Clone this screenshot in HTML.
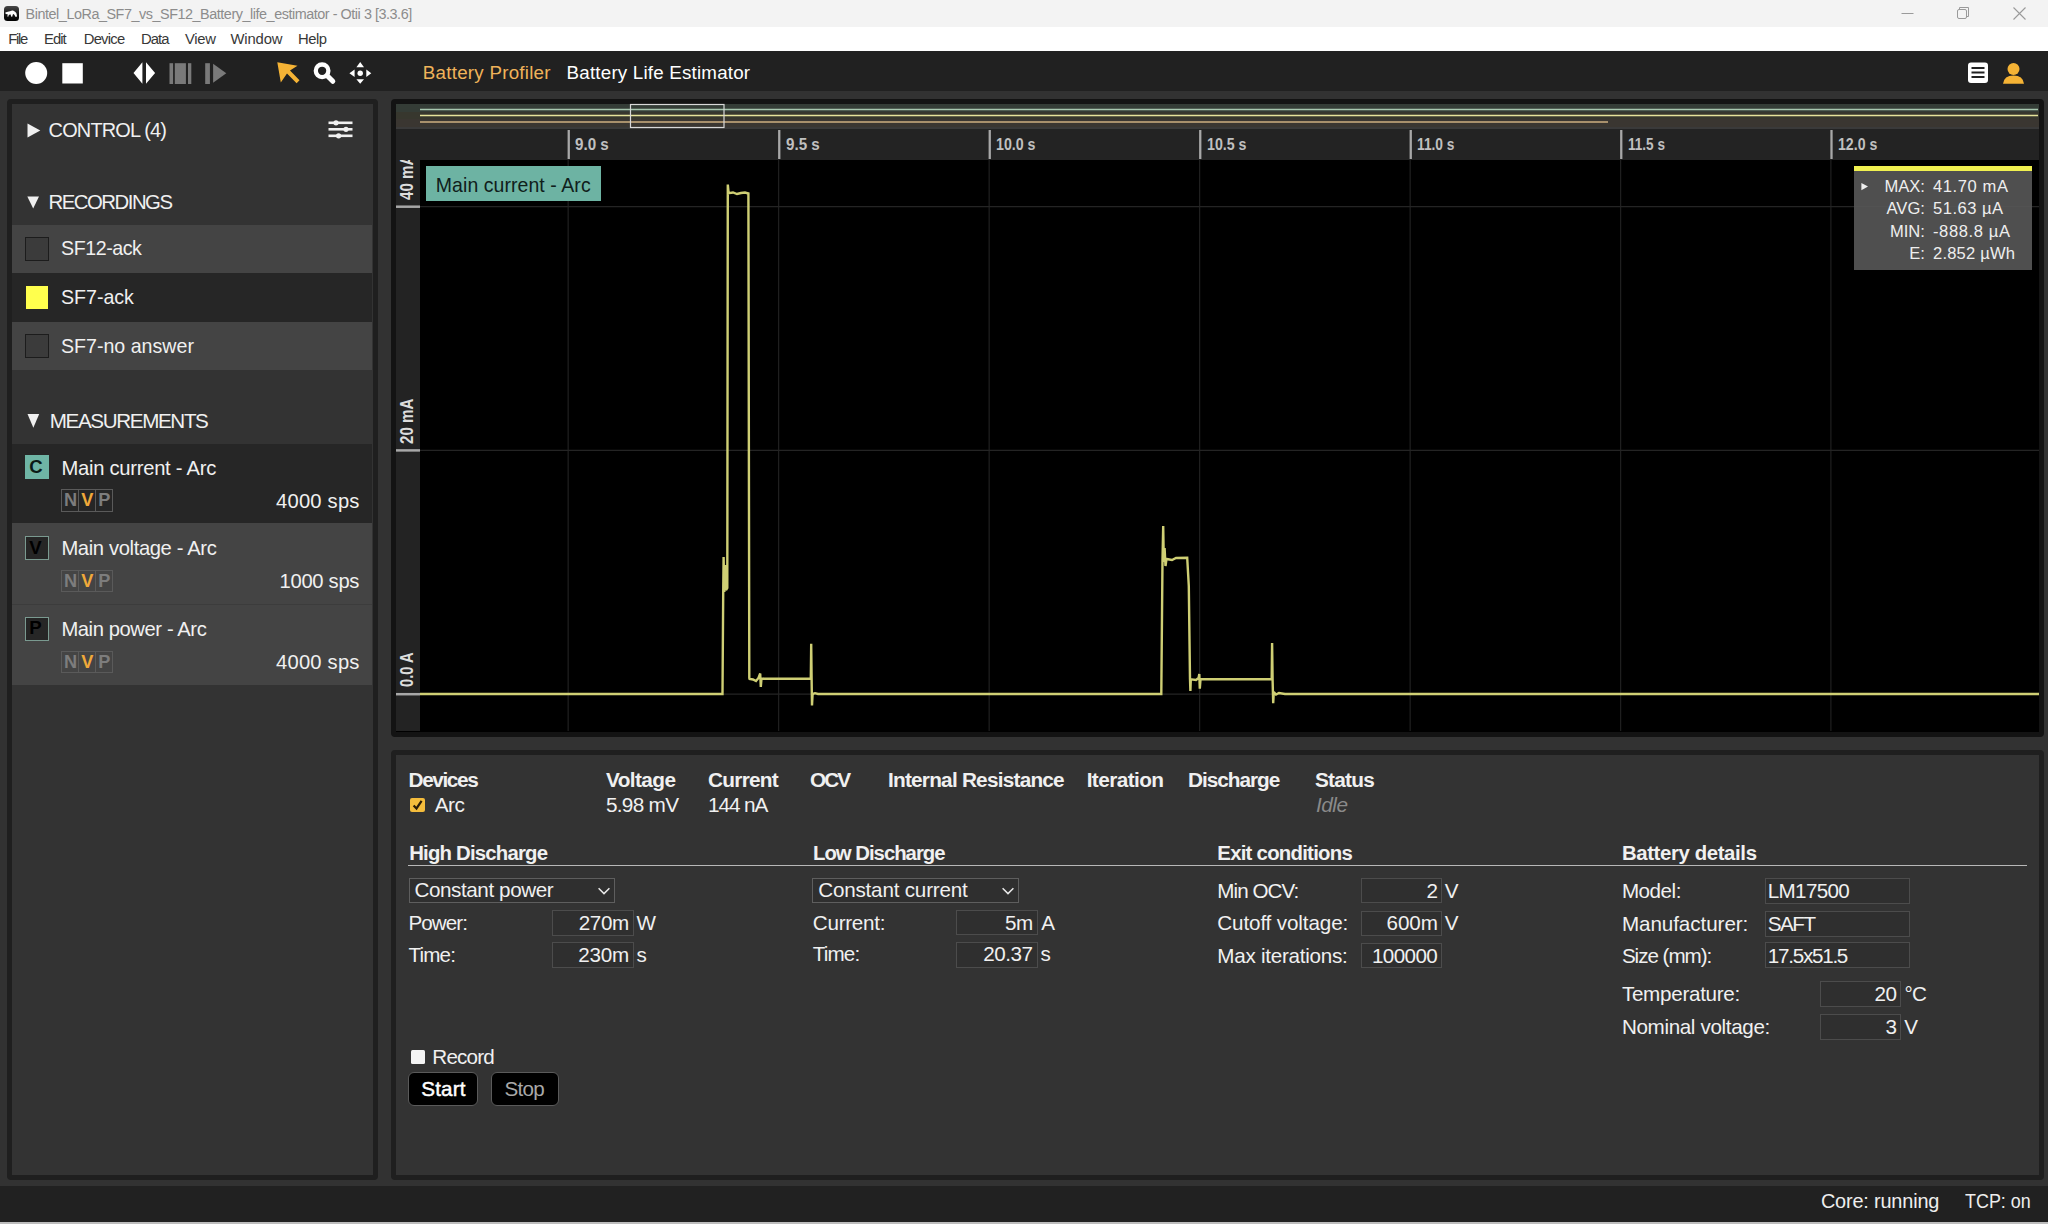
<!DOCTYPE html><html><head><meta charset="utf-8"><style>
html,body{margin:0;padding:0;width:2048px;height:1224px;overflow:hidden;background:#2f2f2f}
body{position:relative;font-family:"Liberation Sans",sans-serif}
.r{position:absolute;box-sizing:content-box}
.t{position:absolute;white-space:nowrap;line-height:1;}
</style></head><body>
<div class="r" style="left:0px;top:0px;width:2048px;height:27px;background:#f3f3f3;"></div>
<div class="r" style="left:0px;top:27px;width:2048px;height:24px;background:#ffffff;"></div>
<div class="r" style="left:0px;top:51px;width:2048px;height:40px;background:#212121;"></div>
<div class="r" style="left:0px;top:91px;width:2048px;height:1095px;background:#323232;"></div>
<div class="r" style="left:0px;top:1186px;width:2048px;height:36px;background:#212121;"></div>
<div class="r" style="left:0px;top:1222px;width:2048px;height:2px;background:#bdbdbd;"></div>
<div class="r" style="left:3.8px;top:5.9px;width:15px;height:15px;background:linear-gradient(#484848,#161616 55%,#000);border-radius:3.5px"></div>
<svg class="r" style="left:0;top:0" width="24" height="26" viewBox="0 0 24 26"><path d="M5.3 12.6 Q8 11.6 10 11.2 Q12 10.2 13 10.5 Q15.5 11.5 16.3 13 Q17 15 17 16.6 L15.7 16.9 L13.8 14 L12.8 14.6 L12.2 16.7 L11 16.5 L10.8 14.6 L8.9 14.7 L8.2 16.7 L7.4 16.5 L7.7 14.3 L5.7 14 Z" fill="#fff"/></svg>
<div class="t" style="left:25.60px;top:6.62px;font-size:14.39px;color:#8c8c8c;letter-spacing:-0.453px;">Bintel_LoRa_SF7_vs_SF12_Battery_life_estimator - Otii 3 [3.3.6]</div>
<svg class="r" style="left:1890px;top:0px" width="158" height="27" viewBox="1890 0 158 27"><line x1="1901.5" y1="13.5" x2="1913.5" y2="13.5" stroke="#9a9a9a" stroke-width="1"/><rect x="1957.5" y="9.5" width="9" height="9" fill="none" stroke="#9a9a9a" stroke-width="1" rx="1.5"/><path d="M1959.5 9.5 V7.5 H1968.5 V16.5 H1966.5" fill="none" stroke="#9a9a9a" stroke-width="1"/><path d="M2013.5 7.5 L2025.5 19.5 M2025.5 7.5 L2013.5 19.5" stroke="#9a9a9a" stroke-width="1.1"/></svg>
<div class="t" style="left:8.20px;top:31.85px;font-size:14.83px;color:#383838;letter-spacing:-1.295px;">File</div>
<div class="t" style="left:44.10px;top:31.85px;font-size:14.83px;color:#383838;letter-spacing:-1.015px;">Edit</div>
<div class="t" style="left:83.70px;top:31.85px;font-size:14.83px;color:#383838;letter-spacing:-0.765px;">Device</div>
<div class="t" style="left:141.00px;top:31.85px;font-size:14.83px;color:#383838;letter-spacing:-0.942px;">Data</div>
<div class="t" style="left:185.00px;top:31.85px;font-size:14.83px;color:#383838;letter-spacing:-0.302px;">View</div>
<div class="t" style="left:230.50px;top:31.85px;font-size:14.83px;color:#383838;letter-spacing:-0.153px;">Window</div>
<div class="t" style="left:298.00px;top:31.85px;font-size:14.83px;color:#383838;letter-spacing:-0.499px;">Help</div>
<svg class="r" style="left:0;top:51px" width="400" height="40" viewBox="0 51 400 40">
<circle cx="36.2" cy="73" r="11" fill="#fff"/>
<rect x="62.3" y="63.2" width="20.5" height="20.3" fill="#fff"/>
<path d="M133.5 73 L142.4 62.3 L142.4 83.7 Z M146 62.3 L155.1 73 L146 83.7 Z" fill="#fff"/>
<rect x="169.5" y="63.2" width="3.6" height="20.8" fill="#7a7a7a"/>
<rect x="174.8" y="63.2" width="11.1" height="20.8" fill="#7a7a7a"/>
<rect x="188" y="63.2" width="3.3" height="20.8" fill="#7a7a7a"/>
<rect x="205.2" y="63.2" width="4.7" height="20.8" fill="#7a7a7a"/>
<path d="M213.1 63.8 L226.3 73.3 L213.1 82.8 Z" fill="#7a7a7a"/>
<path d="M277.3 62.3 L297.5 65.8 L290 70.6 L299.5 80.3 L296.6 83.3 L287 73.6 L280.8 82.5 Z" fill="#f5b335"/>
<circle cx="322.1" cy="70.8" r="6.3" fill="none" stroke="#fff" stroke-width="4.3"/>
<path d="M327.5 76 L332.8 81.3" stroke="#fff" stroke-width="5" stroke-linecap="round"/>
<path d="M360.2 62 L364 67.3 L356.4 67.3 Z M360.2 83.7 L364 79.3 L356.4 79.3 Z M349.4 73.2 L354.6 69.4 L354.6 77 Z M371.3 73.2 L366.3 69.4 L366.3 77 Z" fill="#fff"/>
<circle cx="360.2" cy="73.2" r="2.7" fill="#fff"/>
</svg>
<div class="t" style="left:422.80px;top:64.03px;font-size:18.75px;color:#f0b35a;letter-spacing:0.247px;">Battery Profiler</div>
<div class="t" style="left:566.60px;top:64.03px;font-size:18.75px;color:#ffffff;letter-spacing:0.203px;">Battery Life Estimator</div>
<svg class="r" style="left:1960px;top:55px" width="80" height="35" viewBox="1960 55 80 35">
<rect x="1968" y="62.5" width="20" height="20.5" rx="3" fill="#fff"/>
<rect x="1971.5" y="67" width="13" height="2" fill="#222"/>
<rect x="1971.5" y="71.5" width="13" height="2" fill="#222"/>
<rect x="1971.5" y="76" width="13" height="2" fill="#222"/>
<circle cx="2013.5" cy="69" r="6" fill="#f5b335"/>
<path d="M2003 83.8 Q2004 75.5 2013.5 75.5 Q2023 75.5 2024 83.8 Z" fill="#f5b335"/>
</svg>
<div class="r" style="left:7px;top:99px;width:361px;height:1071px;border:5px solid #1f1f1f;border-radius:4px;background:#333"></div>
<div class="r" style="left:391px;top:99px;width:1643px;height:628px;border:5px solid #131313;border-radius:4px;background:#000"></div>
<div class="r" style="left:391px;top:750px;width:1643px;height:420px;border:5px solid #1f1f1f;border-radius:4px;background:#333"></div>
<svg class="r" style="left:20px;top:115px" width="360" height="330" viewBox="20 115 360 330"><path d="M27.5 123.5 L40.3 130.5 L27.5 137.5 Z" fill="#f0f0f0"/><path d="M27.3 196.6 L39 196.6 L33.2 208.5 Z" fill="#f0f0f0"/><path d="M27.5 414 L39.2 414 L33.35 427.8 Z" fill="#f0f0f0"/><rect x="328.5" y="121.5" width="24" height="2.6" fill="#f0f0f0"/><rect x="328.5" y="128" width="24" height="2.6" fill="#f0f0f0"/><rect x="328.5" y="134.5" width="24" height="2.6" fill="#f0f0f0"/><circle cx="336" cy="122.8" r="2.6" fill="#f0f0f0"/><circle cx="346" cy="129.3" r="2.6" fill="#f0f0f0"/><circle cx="338.6" cy="135.8" r="2.6" fill="#f0f0f0"/></svg>
<div class="t" style="left:48.60px;top:121.24px;font-size:19.91px;color:#f0f0f0;letter-spacing:-0.809px;">CONTROL (4)</div>
<div class="t" style="left:48.60px;top:192.47px;font-size:20.35px;color:#f0f0f0;letter-spacing:-1.503px;">RECORDINGS</div>
<div class="t" style="left:49.70px;top:410.93px;font-size:20.64px;color:#f0f0f0;letter-spacing:-1.364px;">MEASUREMENTS</div>
<div class="r" style="left:12px;top:225px;width:360px;height:48px;background:#444444;"></div>
<div class="r" style="left:12px;top:273px;width:360px;height:48.5px;background:#262626;"></div>
<div class="r" style="left:12px;top:321.5px;width:360px;height:48.5px;background:#444444;"></div>
<div class="r" style="left:25px;top:237px;width:22px;height:22px;border:1px solid #1c1c1c;background:#3b3b3b"></div>
<div class="r" style="left:25.6px;top:286.2px;width:22.4px;height:23px;background:#ffff4d"></div>
<div class="r" style="left:25px;top:334px;width:22px;height:22px;border:1px solid #1c1c1c;background:#3b3b3b"></div>
<div class="t" style="left:61.00px;top:239.29px;font-size:19.62px;color:#f0f0f0;letter-spacing:-0.429px;">SF12-ack</div>
<div class="t" style="left:61.00px;top:288.19px;font-size:19.62px;color:#f0f0f0;letter-spacing:-0.016px;">SF7-ack</div>
<div class="t" style="left:61.00px;top:336.89px;font-size:19.62px;color:#f0f0f0;letter-spacing:-0.005px;">SF7-no answer</div>
<div class="r" style="left:12px;top:443.5px;width:360px;height:79.79999999999995px;background:#262626;"></div>
<div class="r" style="left:12px;top:523.3px;width:360px;height:81.0px;background:#444444;"></div>
<div class="r" style="left:12px;top:604.3px;width:360px;height:80.30000000000007px;background:#444444;"></div>
<div class="r" style="left:12px;top:603.5px;width:360px;height:1.2999999999999545px;background:#3c3c3c;"></div>
<div class="r" style="left:24.8px;top:455.3px;width:22px;height:22px;border:1px solid #6fb5a5;background:#6fb5a5"></div>
<div class="t" style="left:29.30px;top:457.85px;font-size:18.60px;color:#0c1a16;font-weight:bold;">C</div>
<div class="t" style="left:61.40px;top:457.50px;font-size:20.20px;color:#f0f0f0;letter-spacing:-0.260px;">Main current - Arc</div>
<div class="t" style="left:276.00px;top:490.50px;font-size:20.20px;color:#f0f0f0;letter-spacing:0.213px;">4000 sps</div>
<div class="r" style="left:61.4px;top:489.3px;width:49.5px;height:20.4px;border:1px solid #5a5a5a"></div>
<div class="r" style="left:78.4px;top:489.3px;width:1px;height:21.4px;background:#5a5a5a"></div>
<div class="r" style="left:95.2px;top:489.3px;width:1px;height:21.4px;background:#5a5a5a"></div>
<div class="t" style="left:64.00px;top:491.42px;font-size:18.17px;color:#7d7d7d;font-weight:bold;">N</div>
<div class="t" style="left:81.30px;top:491.42px;font-size:18.17px;color:#f0a93a;font-weight:bold;">V</div>
<div class="t" style="left:98.30px;top:491.42px;font-size:18.17px;color:#7d7d7d;font-weight:bold;">P</div>
<div class="r" style="left:24.8px;top:536.0px;width:22px;height:22px;border:1px solid #7a9a90;background:#262626"></div>
<div class="t" style="left:29.30px;top:538.55px;font-size:18.60px;color:#000000;font-weight:bold;">V</div>
<div class="t" style="left:61.40px;top:537.50px;font-size:20.20px;color:#f0f0f0;letter-spacing:-0.364px;">Main voltage - Arc</div>
<div class="t" style="left:279.50px;top:570.70px;font-size:20.20px;color:#f0f0f0;letter-spacing:-0.287px;">1000 sps</div>
<div class="r" style="left:61.4px;top:569.5px;width:49.5px;height:20.4px;border:1px solid #5a5a5a"></div>
<div class="r" style="left:78.4px;top:569.5px;width:1px;height:21.4px;background:#5a5a5a"></div>
<div class="r" style="left:95.2px;top:569.5px;width:1px;height:21.4px;background:#5a5a5a"></div>
<div class="t" style="left:64.00px;top:571.62px;font-size:18.17px;color:#7d7d7d;font-weight:bold;">N</div>
<div class="t" style="left:81.30px;top:571.62px;font-size:18.17px;color:#f0a93a;font-weight:bold;">V</div>
<div class="t" style="left:98.30px;top:571.62px;font-size:18.17px;color:#7d7d7d;font-weight:bold;">P</div>
<div class="r" style="left:24.8px;top:616.6px;width:22px;height:22px;border:1px solid #7a9a90;background:#262626"></div>
<div class="t" style="left:29.30px;top:619.15px;font-size:18.60px;color:#000000;font-weight:bold;">P</div>
<div class="t" style="left:61.40px;top:619.10px;font-size:20.20px;color:#f0f0f0;letter-spacing:-0.406px;">Main power - Arc</div>
<div class="t" style="left:276.00px;top:651.80px;font-size:20.20px;color:#f0f0f0;letter-spacing:0.213px;">4000 sps</div>
<div class="r" style="left:61.4px;top:650.6px;width:49.5px;height:20.4px;border:1px solid #5a5a5a"></div>
<div class="r" style="left:78.4px;top:650.6px;width:1px;height:21.4px;background:#5a5a5a"></div>
<div class="r" style="left:95.2px;top:650.6px;width:1px;height:21.4px;background:#5a5a5a"></div>
<div class="t" style="left:64.00px;top:652.72px;font-size:18.17px;color:#7d7d7d;font-weight:bold;">N</div>
<div class="t" style="left:81.30px;top:652.72px;font-size:18.17px;color:#f0a93a;font-weight:bold;">V</div>
<div class="t" style="left:98.30px;top:652.72px;font-size:18.17px;color:#7d7d7d;font-weight:bold;">P</div>
<div class="r" style="left:396px;top:104px;width:1643px;height:25px;background:#3a3a3a;"></div>
<div class="r" style="left:396px;top:104px;width:1643px;height:8px;background:#343c36;"></div>
<div class="r" style="left:396px;top:112px;width:1643px;height:7px;background:#37372e;"></div>
<div class="r" style="left:396px;top:119px;width:1643px;height:8px;background:#3a3631;"></div>
<div class="r" style="left:396px;top:129px;width:1643px;height:31px;background:#232323;"></div>
<div class="r" style="left:396px;top:160px;width:24px;height:571px;background:#232323;"></div>
<svg class="r" style="left:0;top:0" width="2048" height="1224" viewBox="0 0 2048 1224"><line x1="420" y1="109.5" x2="2038" y2="109.5" stroke="#a6c6ae" stroke-width="1.6"/><line x1="420" y1="115.5" x2="2038" y2="115.5" stroke="#e6e49c" stroke-width="1.6"/><line x1="420" y1="122" x2="1608" y2="122" stroke="#a8906c" stroke-width="1.8"/><rect x="630.5" y="104.5" width="93.5" height="23" fill="none" stroke="#d8d8d8" stroke-width="1.2"/><line x1="568.15" y1="160" x2="568.15" y2="731" stroke="#232323" stroke-width="1.1"/><line x1="568.75" y1="130" x2="568.75" y2="159" stroke="#a8a8a8" stroke-width="2.3"/><line x1="778.65" y1="160" x2="778.65" y2="731" stroke="#232323" stroke-width="1.1"/><line x1="779.25" y1="130" x2="779.25" y2="159" stroke="#a8a8a8" stroke-width="2.3"/><line x1="989.15" y1="160" x2="989.15" y2="731" stroke="#232323" stroke-width="1.1"/><line x1="989.75" y1="130" x2="989.75" y2="159" stroke="#a8a8a8" stroke-width="2.3"/><line x1="1199.65" y1="160" x2="1199.65" y2="731" stroke="#232323" stroke-width="1.1"/><line x1="1200.25" y1="130" x2="1200.25" y2="159" stroke="#a8a8a8" stroke-width="2.3"/><line x1="1410.15" y1="160" x2="1410.15" y2="731" stroke="#232323" stroke-width="1.1"/><line x1="1410.75" y1="130" x2="1410.75" y2="159" stroke="#a8a8a8" stroke-width="2.3"/><line x1="1620.65" y1="160" x2="1620.65" y2="731" stroke="#232323" stroke-width="1.1"/><line x1="1621.25" y1="130" x2="1621.25" y2="159" stroke="#a8a8a8" stroke-width="2.3"/><line x1="1830.9" y1="160" x2="1830.9" y2="731" stroke="#232323" stroke-width="1.1"/><line x1="1831.5" y1="130" x2="1831.5" y2="159" stroke="#a8a8a8" stroke-width="2.3"/><line x1="420" y1="206.7" x2="2039" y2="206.7" stroke="#242424" stroke-width="1.2"/><line x1="396" y1="206.7" x2="420" y2="206.7" stroke="#a8a8a8" stroke-width="2.5"/><line x1="420" y1="450.4" x2="2039" y2="450.4" stroke="#242424" stroke-width="1.2"/><line x1="396" y1="450.4" x2="420" y2="450.4" stroke="#a8a8a8" stroke-width="2.5"/><line x1="420" y1="694.2" x2="2039" y2="694.2" stroke="#242424" stroke-width="1.2"/><line x1="396" y1="694.2" x2="420" y2="694.2" stroke="#a8a8a8" stroke-width="2.5"/></svg>
<div class="t" style="left:575.05px;top:136.22px;font-size:16.28px;color:#c0c0c0;font-weight:bold;transform:scaleX(0.9322);transform-origin:0 0;">9.0 s</div>
<div class="t" style="left:785.55px;top:136.22px;font-size:16.28px;color:#c0c0c0;font-weight:bold;transform:scaleX(0.9322);transform-origin:0 0;">9.5 s</div>
<div class="t" style="left:996.05px;top:136.22px;font-size:16.28px;color:#c0c0c0;font-weight:bold;transform:scaleX(0.8728);transform-origin:0 0;">10.0 s</div>
<div class="t" style="left:1206.55px;top:136.22px;font-size:16.28px;color:#c0c0c0;font-weight:bold;transform:scaleX(0.8728);transform-origin:0 0;">10.5 s</div>
<div class="t" style="left:1417.05px;top:136.22px;font-size:16.28px;color:#c0c0c0;font-weight:bold;transform:scaleX(0.8453);transform-origin:0 0;">11.0 s</div>
<div class="t" style="left:1627.55px;top:136.22px;font-size:16.28px;color:#c0c0c0;font-weight:bold;transform:scaleX(0.8341);transform-origin:0 0;">11.5 s</div>
<div class="t" style="left:1837.80px;top:136.22px;font-size:16.28px;color:#c0c0c0;font-weight:bold;transform:scaleX(0.8684);transform-origin:0 0;">12.0 s</div>
<div class="r" style="left:396px;top:160px;width:24px;height:46px;overflow:hidden">
<div class="r" style="left:-396px;top:-160px;width:2048px;height:1224px">
<div class="r" style="left:413.6px;top:200.4px;width:0;height:0;transform:rotate(-90deg) scaleX(0.8479);transform-origin:0 0;"><div class="t" style="left:0;top:-15.13px;font-size:17.88px;font-weight:bold;color:#dcdcdc;">40 mA</div></div>
</div></div>
<div class="r" style="left:413.6px;top:443.5px;width:0;height:0;transform:rotate(-90deg) scaleX(0.8479);transform-origin:0 0;"><div class="t" style="left:0;top:-15.13px;font-size:17.88px;font-weight:bold;color:#dcdcdc;">20 mA</div></div>
<div class="r" style="left:413.6px;top:686.8px;width:0;height:0;transform:rotate(-90deg) scaleX(0.8272);transform-origin:0 0;"><div class="t" style="left:0;top:-15.13px;font-size:17.88px;font-weight:bold;color:#dcdcdc;">0.0 A</div></div>
<svg class="r" style="left:0;top:0" width="2048" height="1224" viewBox="0 0 2048 1224"><defs><clipPath id="pc"><rect x="420" y="160" width="1619" height="571"/></clipPath></defs><path d="M420,694.0 L722.5,694.0 L723.2,594 L723.6,557 L724.3,592 L725.2,565 L726,590 L727.3,588 L727.8,184.6 L728.6,193.2 L733,192.5 L737,194 L741,193 L745,192.5 L748.4,193.5 L749.3,678 L749.6,679 L753,679.5 L756,681 L758.5,678 L760.2,673.5 L760.8,687 L761.5,678.5 L764,678.8 L810.8,678.8 L811.2,643.7 L811.6,678 L812,705.4 L812.6,694 L815,693.2 L818,694.0 L1161.3,694.0 L1162.5,560 L1163.2,526 L1163.8,562 L1164.6,548 L1165.5,566 L1166.5,559 L1172,560 L1176,558 L1187.2,557.8 L1188.8,586 L1190,679 L1190.4,691 L1190.8,679.3 L1196,680 L1198.6,678 L1199.3,674 L1199.8,688.6 L1200.5,679.3 L1203,679.3 L1271.7,679.3 L1272.1,642.9 L1272.6,680 L1273.2,703.1 L1273.8,692 L1276,694.5 L1279,693 L1285,694.0 L2039,694.0" fill="none" stroke="#cfcf74" stroke-width="2.4" stroke-linejoin="miter" stroke-miterlimit="2" clip-path="url(#pc)"/></svg>
<div class="r" style="left:425.8px;top:166.2px;width:174.99999999999994px;height:35.20000000000002px;background:#6db3a3;"></div>
<div class="t" style="left:435.80px;top:175.91px;font-size:19.48px;color:#10201b;letter-spacing:0.071px;">Main current - Arc</div>
<div class="r" style="left:1854.2px;top:166.1px;width:177.79999999999995px;height:5.300000000000011px;background:#f0f050;"></div>
<div class="r" style="left:1854.2px;top:171.4px;width:177.79999999999995px;height:99.1px;background:rgba(88,88,88,0.9);"></div>
<svg class="r" style="left:1860px;top:182px" width="10" height="10" viewBox="0 0 10 10"><path d="M1.4 1 L8 4.6 L1.4 8.2 Z" fill="#eee"/></svg>
<div class="t" style="left:1884.39px;top:178.77px;font-size:16.57px;color:#eeeeee;">MAX:</div>
<div class="t" style="left:1933.00px;top:178.77px;font-size:16.57px;color:#eeeeee;letter-spacing:0.583px;">41.70 mA</div>
<div class="t" style="left:1886.54px;top:201.37px;font-size:16.57px;color:#eeeeee;">AVG:</div>
<div class="t" style="left:1933.00px;top:201.37px;font-size:16.57px;color:#eeeeee;letter-spacing:0.477px;">51.63 µA</div>
<div class="t" style="left:1889.92px;top:223.87px;font-size:16.57px;color:#eeeeee;">MIN:</div>
<div class="t" style="left:1933.00px;top:223.87px;font-size:16.57px;color:#eeeeee;letter-spacing:0.603px;">-888.8 µA</div>
<div class="t" style="left:1909.24px;top:246.17px;font-size:16.57px;color:#eeeeee;">E:</div>
<div class="t" style="left:1933.00px;top:246.17px;font-size:16.57px;color:#eeeeee;letter-spacing:0.192px;">2.852 µWh</div>
<div class="t" style="left:408.50px;top:770.11px;font-size:20.79px;color:#f0f0f0;font-weight:bold;letter-spacing:-1.381px;">Devices</div>
<div class="t" style="left:606.00px;top:770.11px;font-size:20.79px;color:#f0f0f0;font-weight:bold;letter-spacing:-0.590px;">Voltage</div>
<div class="t" style="left:708.10px;top:770.11px;font-size:20.79px;color:#f0f0f0;font-weight:bold;letter-spacing:-0.743px;">Current</div>
<div class="t" style="left:810.00px;top:770.11px;font-size:20.79px;color:#f0f0f0;font-weight:bold;letter-spacing:-1.971px;">OCV</div>
<div class="t" style="left:888.00px;top:770.11px;font-size:20.79px;color:#f0f0f0;font-weight:bold;letter-spacing:-0.772px;">Internal Resistance</div>
<div class="t" style="left:1086.70px;top:770.11px;font-size:20.79px;color:#f0f0f0;font-weight:bold;letter-spacing:-0.587px;">Iteration</div>
<div class="t" style="left:1188.00px;top:770.11px;font-size:20.79px;color:#f0f0f0;font-weight:bold;letter-spacing:-1.025px;">Discharge</div>
<div class="t" style="left:1315.00px;top:770.11px;font-size:20.79px;color:#f0f0f0;font-weight:bold;letter-spacing:-0.744px;">Status</div>
<div class="r" style="left:410.4px;top:797.6px;width:14.3px;height:14.6px;background:#f4bc3c;border-radius:2px"></div>
<svg class="r" style="left:410px;top:798px" width="16" height="15" viewBox="0 0 16 15"><path d="M3.6 7.4 L6.5 10.4 L11.6 2.9" fill="none" stroke="#2a1c08" stroke-width="2.2"/></svg>
<div class="t" style="left:434.70px;top:794.81px;font-size:20.79px;color:#f0f0f0;letter-spacing:-0.439px;">Arc</div>
<div class="t" style="left:606.00px;top:794.81px;font-size:20.79px;color:#f0f0f0;letter-spacing:-0.734px;">5.98 mV</div>
<div class="t" style="left:708.10px;top:794.81px;font-size:20.79px;color:#f0f0f0;letter-spacing:-1.114px;">144 nA</div>
<div class="t" style="left:1316.00px;top:795.41px;font-size:20.79px;color:#8a8a8a;font-style:italic;letter-spacing:-0.502px;">Idle</div>
<div class="t" style="left:409.20px;top:843.37px;font-size:20.35px;color:#f0f0f0;font-weight:bold;letter-spacing:-0.805px;">High Discharge</div>
<div class="t" style="left:813.00px;top:843.37px;font-size:20.35px;color:#f0f0f0;font-weight:bold;letter-spacing:-1.012px;">Low Discharge</div>
<div class="t" style="left:1217.30px;top:843.37px;font-size:20.35px;color:#f0f0f0;font-weight:bold;letter-spacing:-0.739px;">Exit conditions</div>
<div class="t" style="left:1621.90px;top:843.37px;font-size:20.35px;color:#f0f0f0;font-weight:bold;letter-spacing:-0.368px;">Battery details</div>
<div class="r" style="left:408px;top:864.6px;width:1618.7px;height:1.6000000000000227px;background:#b8b8b8;"></div>
<div class="r" style="left:408.5px;top:877.6px;width:204.5px;height:23.6px;border:1px solid #5e5e5e;background:#2f2f2f"></div>
<div class="t" style="left:414.40px;top:880.13px;font-size:20.64px;color:#f0f0f0;letter-spacing:-0.397px;">Constant power</div>
<svg class="r" style="left:596.7px;top:884px" width="14" height="14" viewBox="0 0 14 14"><path d="M1.6 4.2 L7 9.6 L12.4 4.2" fill="none" stroke="#e8e8e8" stroke-width="1.5"/></svg>
<div class="r" style="left:812.3px;top:877.6px;width:204.5px;height:23.6px;border:1px solid #5e5e5e;background:#2f2f2f"></div>
<div class="t" style="left:818.20px;top:880.13px;font-size:20.64px;color:#f0f0f0;letter-spacing:-0.193px;">Constant current</div>
<svg class="r" style="left:1000.5px;top:884px" width="14" height="14" viewBox="0 0 14 14"><path d="M1.6 4.2 L7 9.6 L12.4 4.2" fill="none" stroke="#e8e8e8" stroke-width="1.5"/></svg>
<div class="t" style="left:408.50px;top:912.93px;font-size:20.64px;color:#f0f0f0;letter-spacing:-0.946px;">Power:</div>
<div class="r" style="left:552.3px;top:909.8px;width:79.40000000000009px;height:23.90000000000009px;border:1px solid #4c4c4c;background:#2f2f2f"></div>
<div class="t" style="left:578.70px;top:912.93px;font-size:20.64px;color:#f0f0f0;letter-spacing:-0.373px;">270m</div>
<div class="t" style="left:636.60px;top:912.93px;font-size:20.64px;color:#f0f0f0;">W</div>
<div class="t" style="left:408.50px;top:944.83px;font-size:20.64px;color:#f0f0f0;letter-spacing:-0.834px;">Time:</div>
<div class="r" style="left:552.3px;top:942px;width:79.40000000000009px;height:23.899999999999977px;border:1px solid #4c4c4c;background:#2f2f2f"></div>
<div class="t" style="left:578.20px;top:944.83px;font-size:20.64px;color:#f0f0f0;letter-spacing:-0.207px;">230m</div>
<div class="t" style="left:636.60px;top:944.83px;font-size:20.64px;color:#f0f0f0;">s</div>
<div class="t" style="left:812.80px;top:912.73px;font-size:20.64px;color:#f0f0f0;letter-spacing:-0.264px;">Current:</div>
<div class="r" style="left:956.3px;top:909.7px;width:79.29999999999995px;height:23.5px;border:1px solid #4c4c4c;background:#2f2f2f"></div>
<div class="t" style="left:1005.00px;top:912.73px;font-size:20.64px;color:#f0f0f0;letter-spacing:-0.569px;">5m</div>
<div class="t" style="left:1041.30px;top:912.73px;font-size:20.64px;color:#f0f0f0;">A</div>
<div class="t" style="left:812.80px;top:944.43px;font-size:20.64px;color:#f0f0f0;letter-spacing:-0.859px;">Time:</div>
<div class="r" style="left:956.3px;top:941.9px;width:79.29999999999995px;height:23.899999999999977px;border:1px solid #4c4c4c;background:#2f2f2f"></div>
<div class="t" style="left:983.20px;top:944.43px;font-size:20.64px;color:#f0f0f0;letter-spacing:-0.435px;">20.37</div>
<div class="t" style="left:1040.60px;top:944.43px;font-size:20.64px;color:#f0f0f0;">s</div>
<div class="t" style="left:1217.30px;top:881.03px;font-size:20.64px;color:#f0f0f0;letter-spacing:-0.956px;">Min OCV:</div>
<div class="r" style="left:1361.3px;top:878px;width:79.10000000000014px;height:23.299999999999955px;border:1px solid #4c4c4c;background:#2f2f2f"></div>
<div class="t" style="left:1426.42px;top:881.03px;font-size:20.64px;color:#f0f0f0;">2</div>
<div class="t" style="left:1444.80px;top:881.03px;font-size:20.64px;color:#f0f0f0;">V</div>
<div class="t" style="left:1217.30px;top:912.93px;font-size:20.64px;color:#f0f0f0;letter-spacing:-0.122px;">Cutoff voltage:</div>
<div class="r" style="left:1361.3px;top:910.9px;width:79.10000000000014px;height:23.300000000000068px;border:1px solid #4c4c4c;background:#2f2f2f"></div>
<div class="t" style="left:1386.60px;top:912.93px;font-size:20.64px;color:#f0f0f0;letter-spacing:-0.107px;">600m</div>
<div class="t" style="left:1444.80px;top:912.93px;font-size:20.64px;color:#f0f0f0;">V</div>
<div class="t" style="left:1217.30px;top:945.83px;font-size:20.64px;color:#f0f0f0;letter-spacing:-0.264px;">Max iterations:</div>
<div class="r" style="left:1361.3px;top:942.6px;width:79.10000000000014px;height:23.699999999999932px;border:1px solid #4c4c4c;background:#2f2f2f"></div>
<div class="t" style="left:1371.90px;top:945.83px;font-size:20.64px;color:#f0f0f0;letter-spacing:-0.575px;">100000</div>
<div class="t" style="left:1621.90px;top:880.73px;font-size:20.64px;color:#f0f0f0;letter-spacing:-0.488px;">Model:</div>
<div class="r" style="left:1765.3px;top:877.9px;width:142.29999999999995px;height:23.800000000000068px;border:1px solid #4c4c4c;background:#2f2f2f"></div>
<div class="t" style="left:1767.80px;top:880.73px;font-size:20.64px;color:#f0f0f0;letter-spacing:-0.678px;">LM17500</div>
<div class="t" style="left:1621.90px;top:913.73px;font-size:20.64px;color:#f0f0f0;letter-spacing:-0.069px;">Manufacturer:</div>
<div class="r" style="left:1765.3px;top:910.6px;width:142.29999999999995px;height:24.100000000000023px;border:1px solid #4c4c4c;background:#2f2f2f"></div>
<div class="t" style="left:1767.80px;top:913.73px;font-size:20.64px;color:#f0f0f0;letter-spacing:-1.485px;">SAFT</div>
<div class="t" style="left:1621.90px;top:946.03px;font-size:20.64px;color:#f0f0f0;letter-spacing:-1.028px;">Size (mm):</div>
<div class="r" style="left:1765.3px;top:942.4px;width:142.29999999999995px;height:24.0px;border:1px solid #4c4c4c;background:#2f2f2f"></div>
<div class="t" style="left:1767.80px;top:946.03px;font-size:20.64px;color:#f0f0f0;letter-spacing:-1.259px;">17.5x51.5</div>
<div class="t" style="left:1621.90px;top:983.73px;font-size:20.64px;color:#f0f0f0;letter-spacing:-0.283px;">Temperature:</div>
<div class="r" style="left:1820.3px;top:980.8px;width:79.10000000000014px;height:23.800000000000068px;border:1px solid #4c4c4c;background:#2f2f2f"></div>
<div class="t" style="left:1874.60px;top:983.73px;font-size:20.64px;color:#f0f0f0;letter-spacing:-0.652px;">20</div>
<div class="t" style="left:1904.60px;top:983.73px;font-size:20.64px;color:#f0f0f0;">°</div>
<div class="t" style="left:1912.00px;top:983.73px;font-size:20.64px;color:#f0f0f0;">C</div>
<div class="t" style="left:1621.90px;top:1017.23px;font-size:20.64px;color:#f0f0f0;letter-spacing:-0.348px;">Nominal voltage:</div>
<div class="r" style="left:1820.3px;top:1013.6px;width:79.10000000000014px;height:23.999999999999886px;border:1px solid #4c4c4c;background:#2f2f2f"></div>
<div class="t" style="left:1885.42px;top:1017.23px;font-size:20.64px;color:#f0f0f0;">3</div>
<div class="t" style="left:1904.20px;top:1017.23px;font-size:20.64px;color:#f0f0f0;">V</div>
<div class="r" style="left:410.9px;top:1050.3px;width:13.9px;height:13.5px;background:#f4f4f4;border-radius:1.5px"></div>
<div class="t" style="left:432.30px;top:1047.43px;font-size:20.64px;color:#f0f0f0;letter-spacing:-0.789px;">Record</div>
<div class="r" style="left:408.2px;top:1071.5px;width:68.1px;height:32.9px;background:#000;border:1px solid #5a5a5a;border-radius:6px"></div>
<div class="r" style="left:490.9px;top:1071.5px;width:65.9px;height:32.9px;background:#000;border:1px solid #5a5a5a;border-radius:6px"></div>
<div class="t" style="left:421.20px;top:1078.73px;font-size:20.64px;color:#ffffff;letter-spacing:0.202px;-webkit-text-stroke:0.45px #fff;">Start</div>
<div class="t" style="left:504.40px;top:1078.73px;font-size:20.64px;color:#a8a8a8;letter-spacing:-0.685px;">Stop</div>
<div class="t" style="left:1820.90px;top:1192.04px;font-size:19.91px;color:#eeeeee;letter-spacing:-0.179px;">Core: running</div>
<div class="t" style="left:1965.40px;top:1192.04px;font-size:19.91px;color:#eeeeee;transform:scaleX(0.9009);transform-origin:0 0;">TCP: on</div>
</body></html>
